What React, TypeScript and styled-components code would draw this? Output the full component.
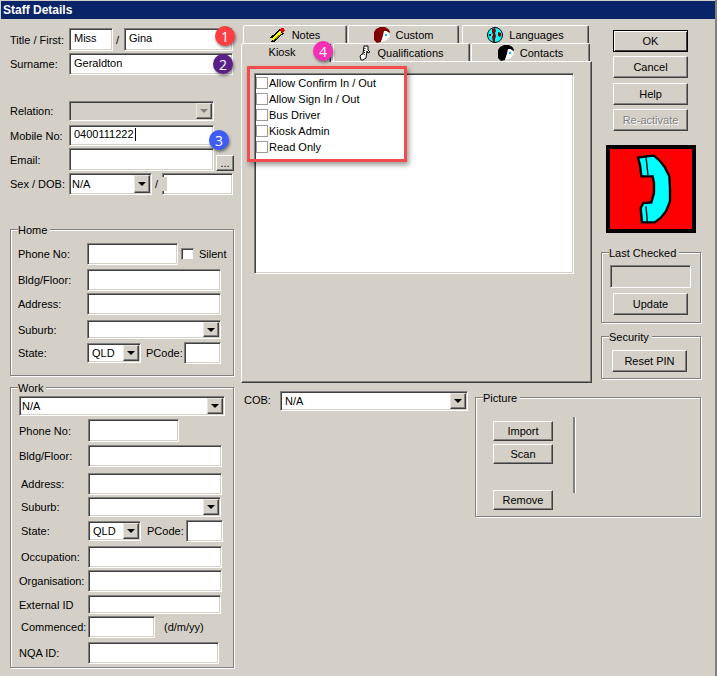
import { ReactNode } from "react";
import styled, { createGlobalStyle } from "styled-components";

const GlobalStyle = createGlobalStyle`
  html, body {
    margin: 0;
    padding: 0;
    background: #d4d0c8;
  }
  * {
    box-sizing: border-box;
  }
`;

const Page = styled.div`
  position: relative;
  width: 717px;
  height: 676px;
  overflow: hidden;
  padding: 1px 0 0 1px;
  background: #d4d0c8;
  border-right: 2px solid #808080;
  font-family: "Liberation Sans", Arial, sans-serif;
  font-size: 11px;
  color: #000;
`;

const TitleBar = styled.div`
  height: 18px;
  margin-right: -2px;
  padding-left: 2px;
  background: #0a246a;
  color: #fff;
  font-weight: 700;
  font-size: 12px;
  line-height: 18px;
`;

const Main = styled.div`
  display: flex;
  padding: 6px 0 0 9px;
`;

const LeftColumn = styled.div`
  width: 224px;
  margin-top: 3px;
  flex: none;
`;

const RightArea = styled.div`
  margin-left: 7px;
  width: 460px;
`;

const TopArea = styled.div`
  display: flex;
`;

const MiddleColumn = styled.div`
  width: 351px;
`;

const SideColumn = styled.div`
  width: 100px;
  margin-left: 9px;
`;

const Row = styled.div<{ $mt?: number }>`
  display: flex;
  align-items: center;
  margin-top: ${(p) => p.$mt ?? 0}px;
`;

const Label = styled.span<{ $w: number; $indent?: number }>`
  flex: none;
  width: ${(p) => p.$w}px;
  padding-left: ${(p) => p.$indent ?? 0}px;
  white-space: nowrap;
`;

const sunken = `
  border-style: solid;
  border-width: 1px;
  border-color: #808080 #fff #fff #808080;
  box-shadow: inset 1px 1px 0 #404040, inset -1px -1px 0 #d4d0c8;
`;

const TextBox = styled.div<{ $w: number; $h: number; $ml?: number; $disabled?: boolean }>`
  ${sunken}
  flex: none;
  width: ${(p) => p.$w}px;
  height: ${(p) => p.$h}px;
  margin-left: ${(p) => p.$ml ?? 0}px;
  padding: 1px 0 0 4px;
  background: ${(p) => (p.$disabled ? "#d4d0c8" : "#fff")};
  line-height: ${(p) => p.$h - 6}px;
  white-space: nowrap;
`;

const Caret = styled.span`
  display: inline-block;
  width: 1px;
  height: 13px;
  margin-left: 1px;
  background: #000;
  vertical-align: -3px;
`;

const Slash = styled.span<{ $w: number; $cover: number }>`
  position: relative;
  z-index: 1;
  flex: none;
  width: ${(p) => p.$w}px;
  margin-right: -${(p) => p.$cover}px;
  padding-left: 3px;
  background: #d4d0c8;
  line-height: 14px;
`;

const ComboBox = styled(TextBox)`
  display: flex;
  align-items: center;
  justify-content: space-between;
  padding: 0 1px 0 2px;
`;

const ComboText = styled.span<{ $pad?: number }>`
  padding-left: ${(p) => p.$pad ?? 0}px;
  line-height: 14px;
`;

const ComboButton = styled.span<{ $disabled?: boolean }>`
  display: flex;
  flex: none;
  align-items: center;
  justify-content: center;
  width: 16px;
  height: calc(100% - 2px);
  background: #d4d0c8;
  border: 1px solid;
  border-color: #e8e6e1 #404040 #404040 #e8e6e1;
  box-shadow: inset -1px -1px 0 #808080;

  &::after {
    content: "";
    border-style: solid;
    border-width: 4px 4px 0;
    border-color: ${(p) => (p.$disabled ? "#808080" : "#000")} transparent transparent;
  }
`;

const Group = styled.div<{ $h: number; $w?: number; $mt?: number; $ml?: number; $pad?: string }>`
  position: relative;
  flex: none;
  width: ${(p) => (p.$w ? `${p.$w}px` : "auto")};
  height: ${(p) => p.$h}px;
  margin-top: ${(p) => p.$mt ?? 0}px;
  margin-left: ${(p) => p.$ml ?? 0}px;
  padding: ${(p) => p.$pad ?? "0"};
  border: 1px solid #808080;
  box-shadow: inset 1px 1px 0 #fff, 1px 1px 0 #fff;
`;

const GroupTitle = styled.span`
  position: absolute;
  top: -7px;
  left: 7px;
  padding: 0 3px 0 0;
  background: #d4d0c8;
  line-height: 15px;
`;

const Check = styled.span`
  flex: none;
  width: 13px;
  height: 12px;
  margin-left: 3px;
  background: #fff;
  border: 1px solid;
  border-color: #808080 #d4d0c8 #d4d0c8 #808080;
  box-shadow: inset 1px 1px 0 #404040;
`;

const SilentLabel = styled.span`
  margin-left: 5px;
`;

const PushButton = styled.div<{
  $w: number;
  $h: number;
  $mt?: number;
  $ml?: number;
  $default?: boolean;
  $disabled?: boolean;
}>`
  display: flex;
  align-items: center;
  justify-content: center;
  width: ${(p) => p.$w}px;
  height: ${(p) => p.$h}px;
  margin-top: ${(p) => p.$mt ?? 0}px;
  margin-left: ${(p) => p.$ml ?? 0}px;
  background: #d4d0c8;
  border-style: solid;
  border-width: 1px;
  border-color: ${(p) => (p.$default ? "#000" : "#fff #404040 #404040 #fff")};
  box-shadow: ${(p) =>
    p.$default
      ? "inset 1px 1px 0 #fff, inset -1px -1px 0 #404040"
      : "inset -1px -1px 0 #808080"};
  color: ${(p) => (p.$disabled ? "#808080" : "#000")};
  text-shadow: ${(p) => (p.$disabled ? "1px 1px 0 #fff" : "none")};
`;

const EllipsisButton = styled(PushButton)`
  align-self: flex-end;
  align-items: flex-end;
  padding-bottom: 1px;
  line-height: 12px;
`;

const TabRow = styled.div<{ $ml: number }>`
  display: flex;
  height: 18px;
  margin-left: ${(p) => p.$ml}px;
`;

const Tab = styled.div<{ $w: number; $ml?: number; $active?: boolean }>`
  position: relative;
  z-index: ${(p) => (p.$active ? 1 : 0)};
  display: flex;
  flex: none;
  align-items: center;
  justify-content: center;
  gap: 6px;
  width: ${(p) => p.$w}px;
  height: ${(p) => (p.$active ? 19 : 18)}px;
  margin-left: ${(p) => p.$ml ?? 0}px;
  padding: 0 ${(p) => (p.$active ? 8 : 0)}px ${(p) => (p.$active ? 3 : 0)}px 0;
  background: #d4d0c8;
  border-style: solid;
  border-width: 1px 1px 0;
  border-color: #fff #404040 transparent #fff;
  border-radius: 2px 2px 0 0;
  box-shadow: inset -1px 0 0 #808080;
`;

const TabPanel = styled.div`
  height: 322px;
  padding: 11px 0 0 12px;
  border-style: solid;
  border-width: 1px;
  border-color: #fff #404040 #404040 #fff;
  box-shadow: inset -1px -1px 0 #808080;
`;

const CheckList = styled.div`
  ${sunken}
  width: 320px;
  height: 201px;
  padding: 1px 0 0 1px;
  background: #fff;
`;

const CheckRow = styled.div`
  display: flex;
  align-items: center;
  gap: 1px;
  height: 16px;
  white-space: nowrap;
`;

const ListCheck = styled.span`
  flex: none;
  width: 12px;
  height: 12px;
  border: 1px solid #9c9c9c;
  background: #fff;
`;

const PhoneTile = styled.div`
  width: 90px;
  height: 88px;
  margin: 14px 0 0 5px;
`;

const BottomRow = styled.div`
  display: flex;
  align-items: flex-start;
  margin-top: 8px;
`;

const CobLabel = styled(Label)`
  margin-top: 3px;
`;

const PictureColumn = styled.div`
  width: 60px;
  margin-top: 4px;
`;

const PictureRule = styled.div`
  width: 2px;
  height: 76px;
  margin-left: 20px;
  background: #808080;
  box-shadow: 1px 0 0 #fff;
`;

const PictureBody = styled.div`
  display: flex;
`;

const Badge = styled.span<{ $x: number; $y: number; $bg: string }>`
  position: absolute;
  z-index: 3;
  left: ${(p) => p.$x}px;
  top: ${(p) => p.$y}px;
  display: flex;
  align-items: center;
  justify-content: center;
  width: 20px;
  height: 20px;
  border-radius: 50%;
  background: ${(p) => p.$bg};
  box-shadow: 1px 2px 3px rgba(0, 0, 0, 0.45);
  color: #fff;
  font-family: "Open Sans", sans-serif;
  font-size: 14px;
`;

const Highlight = styled.div`
  position: absolute;
  z-index: 2;
  left: 247px;
  top: 66px;
  width: 160px;
  height: 96px;
  border: 3px solid #f44c4c;
  box-shadow: 2px 3px 5px rgba(0, 0, 0, 0.4);
`;

const Icon16 = styled.svg<{ $w?: number }>`
  flex: none;
  width: ${(p) => p.$w ?? 16}px;
  height: 16px;
`;

const PencilIcon = () => (
  <Icon16 viewBox="0 0 16 16" shapeRendering="crispEdges">
    <path d="M2 13 L12 4" stroke="#000" strokeWidth="6" />
    <path d="M2 13 L11 5" stroke="#ffff00" strokeWidth="3" />
    <path d="M3 14 L11 7" stroke="#808000" strokeWidth="1" />
    <path d="M11 4.5 L14 2" stroke="#e00000" strokeWidth="4" />
    <path d="M0 15 L3 12 L4 15 Z" fill="#000" />
  </Icon16>
);

const HeadIcon = ({ hair }: { hair: string }) => (
  <Icon16 viewBox="0 0 16 16">
    <path d="M6 0 L11 0 L14 2 L16 5 L10 5 L9 9 L8 12 L7 15 L3 16 L0 13 L0 5 L2 2 Z" fill={hair} />
    <path d="M10 4 L13 4 L15 7 L16 10 L14 11 L13 13 L10 14 L7 15 L9 9 Z" fill="#fff" />
    <path d="M11 7 L13 7 L13 9 L11 9 Z" fill="#00c0e0" />
    <path d="M13 1 L15 3 L16 6 L14 5 Z" fill={hair} />
  </Icon16>
);

const GlobeIcon = () => (
  <Icon16 viewBox="0 0 16 16">
    <circle cx="8" cy="8" r="7.5" fill="#00ffff" stroke="#000" strokeWidth="1" />
    <path d="M5 2 L8 1 L9 4 L8 6 L9 9 L8 12 L8 15 L6 15 L5 10 L6 8 L5 5 Z" fill="#800000" />
    <path d="M11 5 L14 6 L14 9 L12 10 L11 8 Z" fill="#800000" />
    <path d="M2 7 L4 7 L4 9 L2 9 Z" fill="#000" />
  </Icon16>
);

const ScrollIcon = () => (
  <Icon16 viewBox="0 0 12 16" $w={12}>
    <path
      d="M5 1 L9 1 L9 5 L11 7 L9 8 L8 6 L7 13 L4 15 L2 15 L1 11 L3 9 L4 9 Z"
      fill="#fff"
      stroke="#000"
      strokeWidth="1"
    />
    <path d="M6 3 L5 11" stroke="#000" strokeWidth="1" strokeDasharray="1 1" />
  </Icon16>
);

// traced off the reference tile, coordinates are 3x pixels
const PhoneIcon = () => (
  <svg viewBox="6 6 270 264" width="90" height="88" style={{ display: "block" }}>
    <rect x="12" y="12" width="258" height="252" fill="#ff0000" stroke="#000" strokeWidth="12" />
    <path
      d="M102 44 L126 40 L150 38 L168 54 L182 72 L196 100 L198 135 L198 175 L186 205 L170 225 L152 238 L114 238 L110 195 L118 180 L142 178 L150 150 L150 120 L146 100 L112 100 L108 66 Z"
      fill="#00ffff"
      stroke="#000"
      strokeWidth="7"
    />
    <path d="M126 42 L132 96" stroke="#000" strokeWidth="4" />
    <path d="M126 190 L130 236" stroke="#000" strokeWidth="4" />
  </svg>
);

const Combo = ({
  w,
  h,
  ml,
  pad,
  disabled,
  children,
}: {
  w: number;
  h: number;
  ml?: number;
  pad?: number;
  disabled?: boolean;
  children?: ReactNode;
}) => (
  <ComboBox $w={w} $h={h} $ml={ml} $disabled={disabled}>
    <ComboText $pad={pad}>{children}</ComboText>
    <ComboButton $disabled={disabled} />
  </ComboBox>
);

const kioskOptions = [
  "Allow Confirm In / Out",
  "Allow Sign In / Out",
  "Bus Driver",
  "Kiosk Admin",
  "Read Only",
];

export default function App() {
  return (
    <Page>
      <GlobalStyle />
      <TitleBar>Staff Details</TitleBar>
      <Main>
        <LeftColumn>
          <Row>
            <Label $w={59}>Title / First:</Label>
            <TextBox $w={44} $h={23}>Miss</TextBox>
            <Slash $w={11} $cover={0}>/</Slash>
            <TextBox $w={109} $h={23}>Gina</TextBox>
          </Row>
          <Row $mt={2}>
            <Label $w={59}>Surname:</Label>
            <TextBox $w={164} $h={22}>Geraldton</TextBox>
          </Row>
          <Row $mt={26}>
            <Label $w={59}>Relation:</Label>
            <Combo w={145} h={20} disabled />
          </Row>
          <Row $mt={4}>
            <Label $w={59}>Mobile No:</Label>
            <TextBox $w={145} $h={21}>
              0400111222
              <Caret />
            </TextBox>
          </Row>
          <Row $mt={2}>
            <Label $w={59}>Email:</Label>
            <TextBox $w={145} $h={23}></TextBox>
            <EllipsisButton $w={20} $h={16} $ml={2}>...</EllipsisButton>
          </Row>
          <Row $mt={2}>
            <Label $w={59}>Sex / DOB:</Label>
            <Combo w={83} h={22}>N/A</Combo>
            <Slash $w={15} $cover={5}>/</Slash>
            <TextBox $w={71} $h={22}></TextBox>
          </Row>

          <Group $h={147} $mt={34} $pad="13px 0 0 7px">
            <GroupTitle>Home</GroupTitle>
            <Row>
              <Label $w={69}>Phone No:</Label>
              <TextBox $w={91} $h={22}></TextBox>
              <Check />
              <SilentLabel>Silent</SilentLabel>
            </Row>
            <Row $mt={4}>
              <Label $w={69}>Bldg/Floor:</Label>
              <TextBox $w={134} $h={22}></TextBox>
            </Row>
            <Row $mt={2}>
              <Label $w={69}>Address:</Label>
              <TextBox $w={134} $h={22}></TextBox>
            </Row>
            <Row $mt={5}>
              <Label $w={69}>Suburb:</Label>
              <Combo w={134} h={19} />
            </Row>
            <Row $mt={3}>
              <Label $w={69}>State:</Label>
              <Combo w={54} h={20} pad={2}>QLD</Combo>
              <Label $w={43} $indent={5}>PCode:</Label>
              <TextBox $w={37} $h={22}></TextBox>
            </Row>
          </Group>

          <Group $h={281} $mt={11} $pad="8px 0 0 8px">
            <GroupTitle>Work</GroupTitle>
            <Combo w={206} h={20}>N/A</Combo>
            <Row $mt={3}>
              <Label $w={69}>Phone No:</Label>
              <TextBox $w={91} $h={23}></TextBox>
            </Row>
            <Row $mt={3}>
              <Label $w={69}>Bldg/Floor:</Label>
              <TextBox $w={134} $h={22}></TextBox>
            </Row>
            <Row $mt={6}>
              <Label $w={69} $indent={2}>Address:</Label>
              <TextBox $w={134} $h={22}></TextBox>
            </Row>
            <Row $mt={2}>
              <Label $w={69} $indent={2}>Suburb:</Label>
              <Combo w={133} h={20} />
            </Row>
            <Row $mt={3}>
              <Label $w={69} $indent={2}>State:</Label>
              <Combo w={53} h={20} pad={2}>QLD</Combo>
              <Label $w={45} $indent={6}>PCode:</Label>
              <TextBox $w={37} $h={22}></TextBox>
            </Row>
            <Row $mt={4}>
              <Label $w={69} $indent={2}>Occupation:</Label>
              <TextBox $w={134} $h={22}></TextBox>
            </Row>
            <Row $mt={2}>
              <Label $w={69}>Organisation:</Label>
              <TextBox $w={134} $h={22}></TextBox>
            </Row>
            <Row $mt={3}>
              <Label $w={69}>External ID</Label>
              <TextBox $w={133} $h={19}></TextBox>
            </Row>
            <Row $mt={2}>
              <Label $w={69} $indent={2}>Commenced:</Label>
              <TextBox $w={67} $h={22}></TextBox>
              <Label $w={60} $indent={9}>(d/m/yy)</Label>
            </Row>
            <Row $mt={4}>
              <Label $w={69}>NQA ID:</Label>
              <TextBox $w={131} $h={22}></TextBox>
            </Row>
          </Group>
        </LeftColumn>

        <RightArea>
          <TopArea>
            <MiddleColumn>
              <TabRow $ml={2}>
                <Tab $w={104}><PencilIcon />Notes</Tab>
                <Tab $w={111} $ml={1}><HeadIcon hair="#800000" />Custom</Tab>
                <Tab $w={127} $ml={3}><GlobeIcon />Languages</Tab>
              </TabRow>
              <TabRow $ml={0}>
                <Tab $w={90} $active>Kiosk</Tab>
                <Tab $w={137} $ml={2}><ScrollIcon />Qualifications</Tab>
                <Tab $w={119} $ml={1}><HeadIcon hair="#000" />Contacts</Tab>
              </TabRow>
              <TabPanel>
                <CheckList>
                  {kioskOptions.map((option) => (
                    <CheckRow key={option}>
                      <ListCheck />
                      {option}
                    </CheckRow>
                  ))}
                </CheckList>
              </TabPanel>
            </MiddleColumn>

            <SideColumn>
              <PushButton $w={75} $h={22} $mt={5} $ml={12} $default>OK</PushButton>
              <PushButton $w={75} $h={22} $mt={4} $ml={12}>Cancel</PushButton>
              <PushButton $w={75} $h={22} $mt={5} $ml={12}>Help</PushButton>
              <PushButton $w={75} $h={22} $mt={4} $ml={12} $disabled>Re-activate</PushButton>
              <PhoneTile>
                <PhoneIcon />
              </PhoneTile>
              <Group $h={71} $mt={19} $pad="12px 0 0 8px">
                <GroupTitle>Last Checked</GroupTitle>
                <TextBox $w={81} $h={23} $disabled></TextBox>
                <PushButton $w={75} $h={22} $mt={5} $ml={3}>Update</PushButton>
              </Group>
              <Group $h={43} $mt={13} $pad="13px 0 0 10px">
                <GroupTitle>Security</GroupTitle>
                <PushButton $w={75} $h={22}>Reset PIN</PushButton>
              </Group>
            </SideColumn>
          </TopArea>

          <BottomRow>
            <CobLabel $w={39} $indent={3}>COB:</CobLabel>
            <Combo w={188} h={20} pad={2}>N/A</Combo>
            <Group $w={226} $h={120} $mt={6} $ml={7} $pad="19px 0 0 17px">
              <GroupTitle>Picture</GroupTitle>
              <PictureBody>
                <PictureColumn>
                  <PushButton $w={60} $h={20}>Import</PushButton>
                  <PushButton $w={60} $h={20} $mt={3}>Scan</PushButton>
                  <PushButton $w={60} $h={20} $mt={26}>Remove</PushButton>
                </PictureColumn>
                <PictureRule />
              </PictureBody>
            </Group>
          </BottomRow>
        </RightArea>
      </Main>

      <Highlight />
      <Badge $x={215} $y={26} $bg="#fb3f43">1</Badge>
      <Badge $x={213} $y={54} $bg="#5b1f8a">2</Badge>
      <Badge $x={209} $y={130} $bg="#3f5cf6">3</Badge>
      <Badge $x={313} $y={41} $bg="#f52fb4">4</Badge>
    </Page>
  );
}
